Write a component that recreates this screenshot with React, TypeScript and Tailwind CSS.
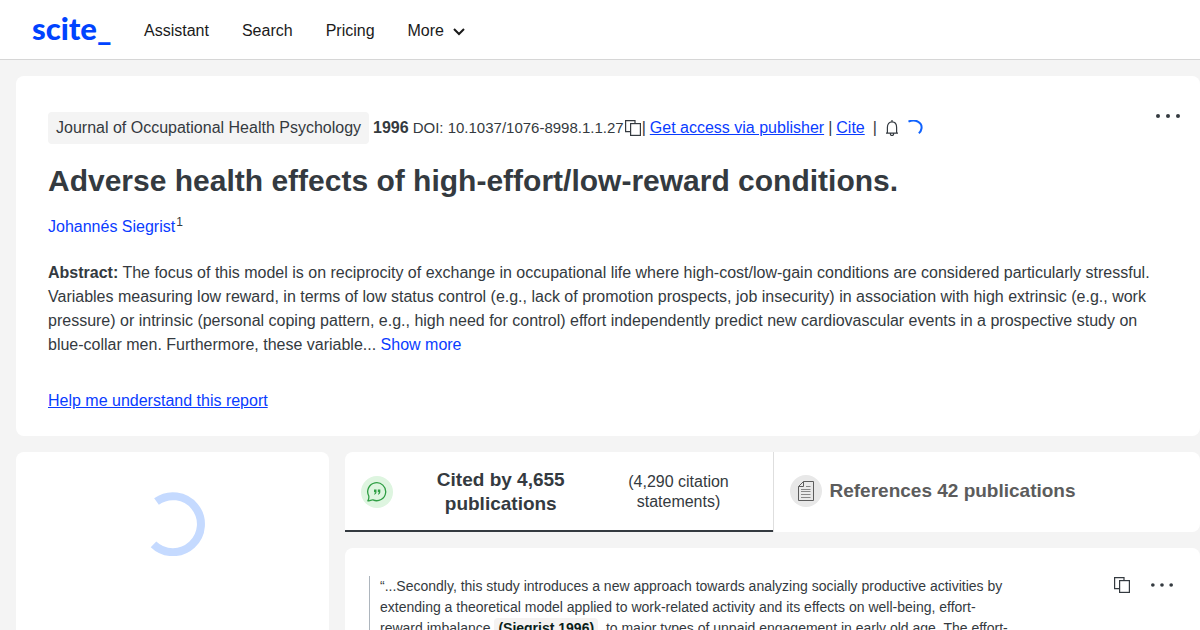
import type { ReactNode } from "react";

const navItems = ["Assistant", "Search", "Pricing"];

function CopyIcon({ className }: { className?: string }) {
  return (
    <svg viewBox="0 0 18 18" className={className} fill="none" stroke="currentColor" strokeWidth="1.2" aria-hidden>
      <path d="M6 12.6H1.6V1.6H11V4" />
      <rect x="6.6" y="4.6" width="9.8" height="11.8" />
    </svg>
  );
}

function DotsIcon({ className }: { className?: string }) {
  return (
    <svg viewBox="0 0 24 4" className={className} fill="currentColor" aria-hidden>
      <circle cx="2" cy="2" r="2" />
      <circle cx="12" cy="2" r="2" />
      <circle cx="22" cy="2" r="2" />
    </svg>
  );
}

function BellIcon() {
  return (
    <svg viewBox="0 0 14 18" className="h-[18px] w-3.5" fill="none" stroke="currentColor" strokeWidth="1.2" aria-hidden>
      <path d="M1 14.2h12M2.4 14V8.2C2.4 5 4.2 2.8 7 2.8s4.6 2.2 4.6 5.4V14M7 2.8V1M5.4 14.4c0 2.8 3.2 2.8 3.2 0" />
    </svg>
  );
}

function QuoteBubbleIcon() {
  return (
    <svg viewBox="0 0 20 20" className="h-5 w-5" fill="none" stroke="currentColor" strokeWidth="1.3" aria-hidden>
      <path d="M.8 18.8c1-1.3 1.2-2.8 1-4.8A9 9 0 1 1 6 17.9c-1.5-.3-3 .9-5.2.9Z" strokeLinejoin="round" />
      <g fill="currentColor" stroke="none">
        <path d="M7 7.600h2.500v2.400c0 1.500-.8 2.400-2.300 2.700v-1c.7-.2 1.100-.7 1.100-1.500H7Z" />
        <path d="M10.800 7.600h2.500v2.400c0 1.500-.8 2.400-2.300 2.700v-1c.7-.2 1.100-.7 1.100-1.500h-1.300Z" />
      </g>
    </svg>
  );
}

function DocumentIcon() {
  return (
    <svg viewBox="0 0 16 20" className="h-5 w-4" fill="none" stroke="currentColor" aria-hidden>
      <path d="M5.5.5h10v19H.5v-14Z M5.5.5v5h-5" />
      <path d="M8 5.5h4.5M3 8.5h9.500M3 10.5h9.500M3 13.5h9.500M3 16.5h9.500" strokeOpacity="0.7" />
    </svg>
  );
}

function TextLink({ children }: { children: ReactNode }) {
  return (
    <a href="#" className="text-[#0a3cff] underline">
      {children}
    </a>
  );
}

function Header() {
  return (
    <header className="flex h-[60px] items-center gap-8 border-b border-[#d6d6d6] bg-white px-8 text-[#1a1a1a]">
      <a href="#" className="w-20 pb-1 font-['Lato',sans-serif] text-[31px] leading-8 font-black text-[#0043ff]">
        scite_
      </a>
      <nav className="flex items-center gap-[33px] pt-0.5">
        {navItems.map((item) => (
          <a key={item} href="#">
            {item}
          </a>
        ))}
        <button type="button" className="flex items-center gap-2">
          More
          <svg viewBox="0 0 14 14" className="h-3.5 w-3.5" fill="none" stroke="currentColor" strokeWidth="2" aria-hidden>
            <path d="m2 5 5 5 5-5" />
          </svg>
        </button>
      </nav>
    </header>
  );
}

function PaperSummary() {
  return (
    <section className="relative rounded-lg bg-white px-8 pt-9 pb-[23px]">
      <button type="button" aria-label="More options" className="absolute top-[38px] right-5">
        <DotsIcon className="h-1 w-6" />
      </button>
      <div className="flex items-center gap-1 whitespace-nowrap">
        <span className="rounded bg-[#f4f4f4] px-2 py-1">Journal of Occupational Health Psychology</span>
        <strong>1996</strong>
        <span className="flex items-center">
          <span className="text-[15px] leading-6">DOI: 10.1037/1076-8998.1.1.27</span>
          <button type="button" aria-label="Copy DOI">
            <CopyIcon className="h-[18px] w-[18px]" />
          </button>
          <span>|</span>
        </span>
        <TextLink>Get access via publisher</TextLink>
        <span>|</span>
        <TextLink>Cite</TextLink>
        <span className="mx-1">|</span>
        <button type="button" aria-label="Create alert">
          <BellIcon />
        </button>
        <svg viewBox="0 0 16 16" className="ml-1 h-4 w-4" fill="none" stroke="#0f62fe" strokeWidth="2" aria-label="Loading">
          <path d="M1.500 1.700C8-1.500 15.500 2.500 14.500 8.500c-.3 2-1.300 3.700-2.700 4.800" />
        </svg>
      </div>
      <h1 className="mt-4 text-3xl leading-[42px] font-bold">
        Adverse health effects of high-effort/low-reward conditions.
      </h1>
      <p className="mt-[13px]">
        <a href="#" className="text-[#0a3cff]">
          Johannés Siegrist
        </a>
        <sup className="ml-px text-xs">1</sup>
      </p>
      <p className="mt-[22px]">
        <strong>Abstract:</strong> The focus of this model is on reciprocity of exchange in occupational life where
        high-cost/low-gain conditions are considered particularly stressful. Variables measuring low reward, in terms of
        low status control (e.g., lack of promotion prospects, job insecurity) in association with high extrinsic (e.g.,
        work pressure) or intrinsic (personal coping pattern, e.g., high need for control) effort independently predict
        new cardiovascular events in a prospective study on blue-collar men. Furthermore, these variable...{" "}
        <button type="button" className="text-[#0a3cff]">
          Show more
        </button>
      </p>
      <p className="mt-8">
        <TextLink>Help me understand this report</TextLink>
      </p>
    </section>
  );
}

function SidePanel() {
  return (
    <aside className="flex justify-center rounded-lg bg-white pt-10 pb-32">
      <svg viewBox="0 0 64 64" className="h-16 w-16" fill="none" stroke="#c5daff" strokeWidth="8" aria-label="Loading">
        <path d="M15.500 9.500A28 28 0 1 1 12.500 52.300" />
      </svg>
    </aside>
  );
}

function Tabs() {
  return (
    <div role="tablist" className="flex h-20 overflow-hidden rounded-lg rounded-bl-none bg-white">
      <button
        type="button"
        role="tab"
        aria-selected="true"
        className="flex w-1/2 items-center border-b-2 border-[#343a40] px-4 pt-0.5 text-center"
      >
        <span className="flex h-8 w-8 shrink-0 items-center justify-center rounded-full bg-[#def5e0] text-[#2f9e44]">
          <QuoteBubbleIcon />
        </span>
        <span className="flex-1 pr-8 pl-10 text-[19px] leading-6 font-bold">Cited by 4,655 publications</span>
        <span className="w-[156px] px-5 leading-5">(4,290 citation statements)</span>
      </button>
      <button
        type="button"
        role="tab"
        aria-selected="false"
        className="flex w-1/2 items-center gap-2 border-l border-[#dedede] px-4 pb-0.5 text-[#5c5c5c]"
      >
        <span className="flex h-8 w-8 shrink-0 items-center justify-center rounded-full bg-[#e8e8e8]">
          <DocumentIcon />
        </span>
        <span className="text-[19px] leading-6 font-bold">References 42 publications</span>
      </button>
    </div>
  );
}

function CitationStatement() {
  return (
    <article className="flex items-start rounded-lg bg-white pt-7 pr-[27px] pb-6 pl-6">
      <blockquote className="w-[648px] border-l border-[#adb5bd] pl-2.5 text-sm leading-[21px]">
        “...Secondly, this study introduces a new approach towards analyzing socially productive activities by extending
        a theoretical model applied to work-related activity and its effects on well-being, effort-reward imbalance{" "}
        <mark className="rounded bg-[#f5f3f2] px-1 py-0.5 font-bold text-[#0b1f1a]">(Siegrist 1996)</mark>, to major
        types of unpaid engagement in early old age. The effort-reward...”
      </blockquote>
      <div className="ml-auto flex items-center gap-5">
        <button type="button" aria-label="Copy statement">
          <CopyIcon className="h-[18px] w-[18px]" />
        </button>
        <button type="button" aria-label="Statement options">
          <DotsIcon className="h-1 w-[22px]" />
        </button>
      </div>
    </article>
  );
}

export default function App() {
  return (
    <div className="min-h-screen bg-[#f4f4f4] font-['Liberation_Sans',Arial,sans-serif] text-base leading-6 text-[#343a40]">
      <Header />
      <main className="space-y-4 py-4 pl-4">
        <PaperSummary />
        <div className="grid grid-cols-[313px_1fr] items-start gap-4">
          <SidePanel />
          <div className="space-y-4">
            <Tabs />
            <CitationStatement />
          </div>
        </div>
      </main>
    </div>
  );
}
